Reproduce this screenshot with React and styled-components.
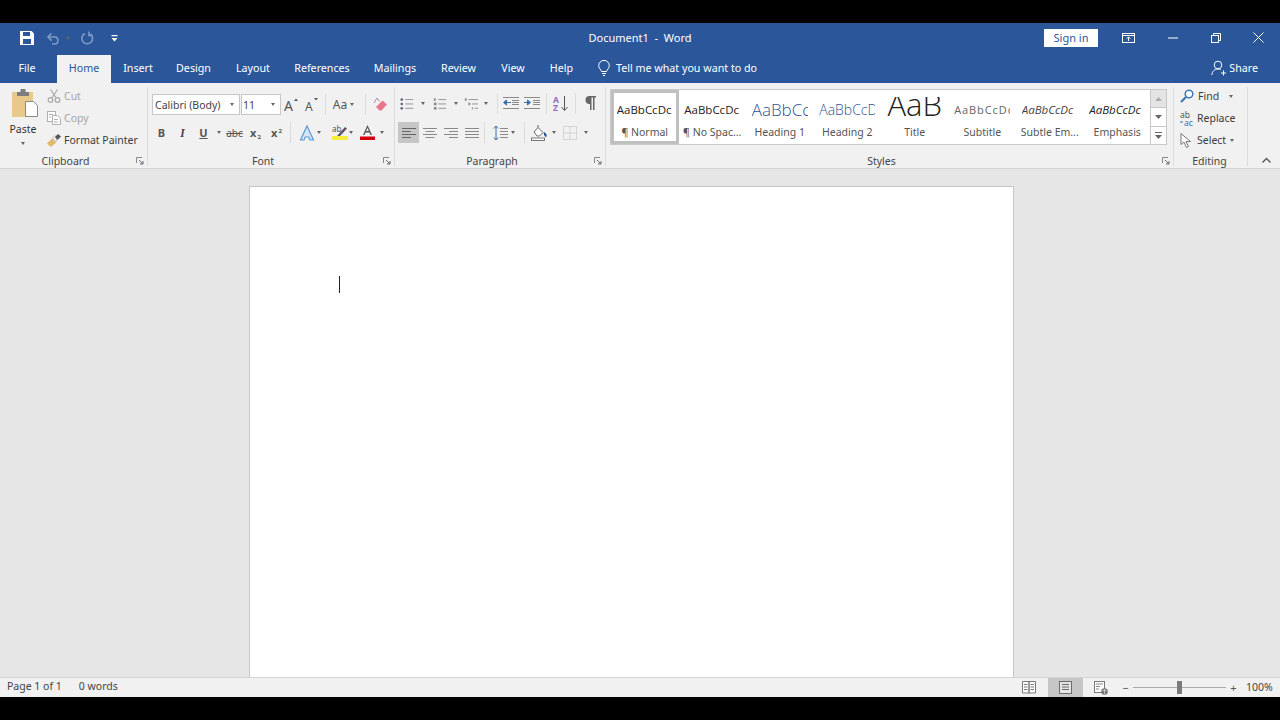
import React from "react";
import styled, { createGlobalStyle } from "styled-components";

const Global = createGlobalStyle`
  html, body { margin: 0; padding: 0; background: #000; }
  body { font-family: "Noto Sans", "Open Sans", sans-serif; }
`;

const Page = styled.div`
  width: 1280px; height: 720px; box-sizing: border-box; padding: 23px 0;
  display: flex; flex-direction: column; background: #000; overflow: hidden;
`;
const TitleBar = styled.div`
  height: 31px; flex: none; box-sizing: border-box; padding-bottom: 2px; background: #2b579a; color: #fff;
  display: grid; grid-template-columns: 1fr auto 1fr; align-items: center;
`;
const QuickAccess = styled.div`display: flex; align-items: center; padding-left: 20px; margin-top: 1px;`;
const DocTitle = styled.div`font-size: 11px; white-space: pre;`;
const WindowControls = styled.div`display: flex; align-items: center; justify-content: flex-end;`;
const SignIn = styled.div`
  width: 54px; height: 18px; background: #fff; color: #2b579a; font-size: 11px;
  display: flex; align-items: center; justify-content: center; margin-right: 24px;
`;
const WinBtn = styled.div`
  width: 14px; height: 14px; display: flex; align-items: center;
  margin-left: ${p => p.$ml || 0}px; margin-right: ${p => p.$mr || 0}px;
`;
const TabBar = styled.div`
  height: 29px; flex: none; background: #2b579a; color: #fff; display: flex; align-items: flex-end;
  padding-left: 8px; font-size: 10.7px;
`;
const Tab = styled.div`
  width: ${p => p.$w}px; height: 28px; display: flex; align-items: center; justify-content: center;
  padding-bottom: 2px; box-sizing: border-box; margin-right: ${p => p.$mr || 0}px;
  background: ${p => (p.$active ? "#f1f1f1" : "transparent")};
  color: ${p => (p.$active ? "#2b579a" : "#fff")};
`;
const TellMe = styled.div`display: flex; align-items: center; gap: 6px; height: 28px; padding-bottom: 2px; box-sizing: border-box; margin-left: 14px;`;
const Share = styled.div`display: flex; align-items: center; gap: 2px; height: 28px; padding-bottom: 2px; box-sizing: border-box; margin-left: auto; margin-right: 22px;`;

const Ribbon = styled.div`
  height: 86px; flex: none; box-sizing: border-box; padding-top: 4px; background: #f1f1f1;
  border-bottom: 1px solid #d4d4d4; display: flex; align-items: flex-start; color: #444;
`;
const Group = styled.div`
  width: ${p => p.$w}px; height: 79px; flex: none; box-sizing: border-box; display: flex; flex-direction: column;
  border-right: 1px solid #dcdcdc;
`;
const GroupBody = styled.div`
  height: 69px; flex: none; box-sizing: border-box; display: flex;
  flex-direction: ${p => (p.$row ? "row" : "column")};
  padding-top: ${p => p.$pt || 0}px;
`;
const GroupFoot = styled.div`height: 10px; display: flex; align-items: center; font-size: 10.5px; color: #444;`;
const GroupName = styled.div`flex: 1; text-align: center; padding-right: ${p => p.$pr ?? 5}px; line-height: 10px;`;
const Launcher = styled.svg`width: 8px; height: 8px; margin-right: 3px; flex: none; display: block;`;

const PasteCol = styled.div`
  width: 46px; flex: none; display: flex; flex-direction: column; align-items: center; padding-top: 2px;
  box-sizing: border-box; font-size: 10.5px; color: #333;
`;
const PasteLabel = styled.div`line-height: 14px; margin-top: 5px;`;
const PasteCaret = styled.div`
  width: 0; height: 0; margin-top: 6px; border: 2.5px solid transparent; border-top: 3px solid #666; border-bottom: 0;
`;
const SmallCol = styled.div`display: flex; flex-direction: column; gap: 4px; padding-left: ${p => p.$pl || 0}px;`;
const SmallRow = styled.div`
  height: 18px; display: flex; align-items: center; font-size: 10.5px;
  color: ${p => (p.$dim ? "#a6a6a6" : "#3c3c3c")};
  gap: ${p => p.$gap ?? 3}px;
`;
const Row = styled.div`
  height: 21px; box-sizing: border-box; display: flex; align-items: center; padding-left: ${p => p.$pl || 0}px; margin-bottom: 7px;
  padding-bottom: ${p => p.$pb || 0}px;
`;
const Combo = styled.div`
  width: ${p => p.$w}px; height: 21px; box-sizing: border-box; margin-left: ${p => p.$ml || 0}px; background: #fff;
  border: 1px solid #c6c6c6; display: flex; align-items: center; justify-content: space-between;
  padding: 0 4px 0 ${p => p.$pl ?? 2}px; font-size: 10.5px; color: #444; white-space: nowrap;
`;
const Tool = styled.div`
  width: ${p => p.$w || 16}px; height: 21px; flex: none; margin-left: ${p => p.$ml || 0}px;
  display: flex; align-items: center; justify-content: center;
  background: ${p => (p.$active ? "#c6c6c6" : "transparent")};
`;
const Letter = styled.span`
  font-family: "Liberation Serif", serif; font-size: 11.5px; color: #444; font-style: italic; font-weight: 700;
`;
const SansLetter = styled.span`
  font-size: ${p => p.$s || 11}px; color: #555; font-weight: ${p => p.$b ? 700 : 400}; white-space: nowrap;
  text-decoration: ${p => p.$strike ? "line-through" : "none"};
`;
const Sup = styled.span`font-size: 6px; position: relative; top: ${p => p.$t}px; color: #555; margin-left: 1px;`;
const CaretBox = styled.div`
  width: 6px; height: 21px; flex: none; margin-left: ${p => p.$ml || 0}px; display: flex; align-items: center; justify-content: center;
  &::after { content: ""; border: 2.5px solid transparent; border-top: 3px solid #666; border-bottom: 0; }
`;
const Sep = styled.div`width: 1px; height: 21px; flex: none; background: #dcdcdc; margin-left: ${p => p.$ml || 0}px;`;

const Gallery = styled.div`
  margin: 2px 0 0 4px; width: 557px; height: 56px; box-sizing: border-box; background: #fff; border: 1px solid #c8c8c8;
  display: flex;
`;
const StyleList = styled.div`flex: 1; display: flex; padding: 0; min-width: 0;`;
const StyleItem = styled.div`
  width: 67.5px; flex: none; box-sizing: border-box; display: flex; flex-direction: column; align-items: center;
  border: ${p => (p.$active ? "3px solid #c0c0c0" : "3px solid transparent")}; overflow: hidden;
`;
const StylePreview = styled.div`
  width: 56px; flex: none; overflow: hidden; box-sizing: border-box; display: flex; align-items: center; white-space: nowrap;
  height: ${p => p.$clip ? 27 : 30}px; margin-top: ${p => p.$clip ? 4 : 1}px; padding-bottom: ${p => p.$clip ? 13 : 0}px;
  font-family: "Open Sans", sans-serif;
  font-size: ${p => p.$s}px; color: ${p => p.$c || "#222"}; font-style: ${p => p.$i ? "italic" : "normal"};
  letter-spacing: ${p => p.$ls || 0}px; font-weight: ${p => p.$w || 400}; line-height: 27px;
  justify-content: ${p => p.$clip ? "center" : "flex-start"};
`;
const StyleLabel = styled.div`font-size: 10.5px; color: #555; white-space: nowrap; line-height: 14px; margin-top: 1px;`;
const ScrollCol = styled.div`width: 15px; flex: none; display: flex; flex-direction: column; border-left: 1px solid #c8c8c8;`;
const ScrollBtn = styled.div`
  flex: 1; display: flex; align-items: center; justify-content: center; background: ${p => p.$dim ? "#e4e4e4" : "#fff"};
  & + & { border-top: 1px solid #c8c8c8; }
`;
const Collapse = styled.div`flex: 1; height: 79px; box-sizing: border-box; display: flex; align-items: flex-end; justify-content: center; padding: 0 0 3px 4px;`;

const Canvas = styled.div`flex: 1; min-height: 0; background: #e6e6e6; padding: 17px 0 0 249px; overflow: hidden;`;
const Paper = styled.div`
  width: 765px; height: 900px; box-sizing: border-box; background: #fff; border: 1px solid #c6c6c6;
  padding: 89px 0 0 89px;
`;
const Caret = styled.div`width: 1px; height: 17px; background: #222;`;
const StatusBar = styled.div`
  height: 20px; flex: none; box-sizing: border-box; background: #f1f1f1; border-top: 1px solid #d4d4d4;
  display: flex; align-items: center; font-size: 10.5px; color: #444;
`;
const StatusText = styled.div`margin-left: ${p => p.$ml}px; margin-bottom: 2px; line-height: 17px; white-space: nowrap;`;
const StatusRight = styled.div`margin-left: auto; display: flex; align-items: center;`;
const ViewBtn = styled.div`
  width: ${p => p.$w}px; height: 19px; flex: none; display: flex; align-items: center; justify-content: center;
  background: ${p => p.$active ? "#c6c6c6" : "transparent"};
  margin-left: ${p => p.$ml || 0}px;
`;
const Slider = styled.div`
  width: 93px; height: 1px; background: #aaa; margin-left: 4px; display: flex; align-items: center; justify-content: center;
  &::after { content: ""; width: 5px; height: 13px; background: #7a7a7a; flex: none; margin-left: -1px; }
`;
const Zoom = styled.div`margin-left: 9px; width: 34px; font-size: 10.5px; margin-bottom: 2px;`;
const Ico = styled.svg`display: block; flex: none; overflow: visible;`;
const PasteSvg = styled(Ico)`margin-left: 4px;`;

const Lines = ({ ys, x1 = 6, x2 = 15, c = "#8a8a8a" }) => ys.map(y => <line key={y} x1={x1} x2={x2} y1={y} y2={y} stroke={c} />);

const Save = () => <Ico width="14" height="14" viewBox="0 0 14 14"><path d="M0 0h11.5L14 2.5V14H0z" fill="#fff"/><rect x="3" y="1" width="7" height="4" fill="#2b579a"/><rect x="3" y="8" width="8" height="5" fill="#2b579a"/></Ico>;
const Undo = () => <Ico width="14" height="13" viewBox="0 0 14 13" fill="none" stroke="#7e9ac6" strokeWidth="1.6"><path d="M1 5h8a4 4 0 0 1 0 7H5M4.5 1.2 1 5l3.5 3.6"/></Ico>;
const Redo = () => <Ico width="14" height="14" viewBox="0 0 14 14" fill="none" stroke="#7e9ac6" strokeWidth="1.6"><path d="M5 2.4A5.4 5.4 0 1 0 10.4 3M9 .5v4h4"/></Ico>;
const Custom = () => <Ico width="7" height="7" viewBox="0 0 7 7"><rect x="0.5" y="0" width="6" height="1.2" fill="#fff"/><path d="M0.5 3h6L3.5 6.5z" fill="#fff"/></Ico>;
const Bulb = () => <Ico width="12" height="17" viewBox="0 0 12 17" fill="none" stroke="#fff"><path d="M3.500 11.500C3 9.500.700 8.500.700 5.700a5.300 5.300 0 0 1 10.600 0c0 2.800-2.300 3.800-2.800 5.800z"/><path d="M4 13.500h4M5 15.500h2"/></Ico>;
const ShareIco = () => <Ico width="16" height="16" viewBox="0 0 16 16" fill="none" stroke="#fff"><circle cx="7" cy="5" r="3.800"/><path d="M.8 15c.5-3.800 2.800-6 6.200-6 1 0 2 .2 2.700.7M10 13h5M12.500 10.500v5"/></Ico>;
const RibbonOpt = () => <Ico width="13" height="10" viewBox="0 0 13 10" fill="none" stroke="#fff"><rect x=".5" y=".5" width="12" height="9"/><path d="M.5 2.500h12"/><path d="M6.500 8V4M4.800 5.600l1.700-1.700 1.700 1.700"/></Ico>;
const Min = () => <Ico width="10" height="10" viewBox="0 0 10 10"><line x1="0" x2="10" y1="5" y2="5" stroke="#fff"/></Ico>;
const Restore = () => <Ico width="10" height="10" viewBox="0 0 10 10" fill="none" stroke="#fff"><rect x=".5" y="2.500" width="7" height="7"/><path d="M2.500 2.500v-2h7v7h-2"/></Ico>;
const Close = () => <Ico width="11" height="11" viewBox="0 0 11 11" stroke="#fff"><path d="M.5.500l10 10M10.500.500l-10 10"/></Ico>;

const PasteIco = () => (
  <PasteSvg width="26" height="28" viewBox="0 0 26 28">
    <rect x="0" y="3" width="21" height="25" fill="#e9c88c"/>
    <rect x="5" y="3" width="12" height="4" fill="#7d7d7d"/>
    <rect x="8.500" y="0" width="5" height="4" fill="#7d7d7d"/>
    <path d="M13.500 12.500h8l4 4v11h-12z" fill="#fff" stroke="#8a8a8a"/>
  </PasteSvg>
);
const CutIco = () => <Ico width="14" height="14" viewBox="0 0 14 14" fill="none" stroke="#a8a8a8" strokeWidth="1.200"><circle cx="3.500" cy="11" r="2.300"/><circle cx="10.500" cy="11" r="2.300"/><path d="M4.800 9 10.500.500M9.200 9 3.500.500"/></Ico>;
const CopyIco = () => <Ico width="14" height="14" viewBox="0 0 14 14" fill="#fff" stroke="#b0b0b0"><rect x=".5" y=".5" width="8" height="10"/><path d="M5.500 4.500h5l3 3v6h-8z"/><path d="M2 3.500h4M2 6h2M7 8.500h4M7 11h4" /></Ico>;
const Painter = () => <Ico width="14" height="13" viewBox="0 0 14 13"><path d="M0 9.500 5 4.500 9 8.500 4 13z" fill="#e0b868"/><path d="M5.500 4 8 1.500 10.500 4 9 8z" fill="#eee" stroke="#999" strokeWidth=".5"/><path d="M8 3l3-3 3 2.500-3.500 3.500z" fill="#555"/></Ico>;
const AUp = ({ up }) => <Ico width="14" height="14" viewBox="0 0 14 14"><text x="0" y="13" fontFamily="Noto Sans" fontSize={up ? 14 : 12} fill="#555">A</text>{up ? <path d="M10 3l2-2.500L14 3z" fill="#555"/> : <path d="M9 0h4l-2 2.500z" fill="#555"/>}</Ico>;
const Eraser = () => <Ico width="15" height="14" viewBox="0 0 15 14"><path d="M4 9 10.500 2.500l4.500 4-5.500 6H7.500z" fill="#e9768c"/><path d="M2 5 5 0l2.500 3.500" fill="none" stroke="#b08aa0"/></Ico>;
const TextEffect = () => <Ico width="16" height="16" viewBox="0 0 16 16"><path d="M8 1 14.500 15h-3.500l-1.200-3H6.200L5 15H1.500z" fill="#d6e6f7" stroke="#5b9bd5" strokeWidth="1.200"/></Ico>;
const Highlight = () => <Ico width="17" height="15" viewBox="0 0 17 15"><rect x="0" y="11" width="16" height="4" fill="#f5ee3a"/><text x="0" y="7" fontFamily="Noto Sans" fontSize="8" fill="#555">ab</text><path d="M5 11 13 2l2 1.500-7 7.500z" fill="#555"/></Ico>;
const FontColor = () => <Ico width="15" height="15" viewBox="0 0 15 15"><path d="M7.500 0 12 10h-1.500L9.400 7.500H5.600L4.500 10H3zM6.200 6h2.600L7.500 2.800z" fill="#555"/><rect x="0" y="11.500" width="15" height="3.500" fill="#d6000f"/></Ico>;

const Bullets = () => <Ico width="14" height="13" viewBox="0 0 16 14"><Lines ys={[2.500, 7.500, 12.500]}/><circle cx="2" cy="2.500" r="1.500" fill="#667"/><circle cx="2" cy="7.500" r="1.500" fill="#667"/><circle cx="2" cy="12.500" r="1.500" fill="#667"/></Ico>;
const Numbers = () => <Ico width="14" height="13" viewBox="0 0 16 14"><Lines ys={[2.500, 7.500, 12.500]}/><rect x="1" y="1" width="2" height="3" fill="#8a8a8a"/><rect x="1" y="6" width="3" height="3" fill="#8a8a8a"/><rect x="1" y="11" width="3" height="3" fill="#8a8a8a"/></Ico>;
const Multi = () => <Ico width="14" height="13" viewBox="0 0 16 14"><Lines ys={[2.500]} x1={5} x2={16}/><Lines ys={[7.500]} x1={9} x2={16}/><Lines ys={[12.500]} x1={12} x2={16}/><rect x="1" y="1" width="2" height="3" fill="#8a8a8a"/><rect x="5" y="6" width="2" height="3" fill="#8a8a8a"/><rect x="9" y="11" width="1" height="3" fill="#8a8a8a"/></Ico>;
const Indent = ({ inc }) => (
  <Ico width="16" height="12" viewBox="0 0 16 12">
    <Lines ys={[.5, 11.5]} x1={0} x2={16}/>
    <Lines ys={[3.500, 5.500, 7.500]} x1={9} x2={16}/>
    <path d={inc ? "M0 5.500h5M3.500 3l3 2.500-3 2.500z" : "M3 5.500h5M3.500 3l-3 2.500 3 2.500z"} fill="#3b6fb0" stroke="#3b6fb0"/>
  </Ico>
);
const Sort = () => <Ico width="16" height="17" viewBox="0 0 16 17"><text x="0" y="7.500" fontFamily="Noto Sans" fontSize="8.500" fontWeight="700" fill="#8f6cc0">A</text><text x="0" y="16" fontFamily="Noto Sans" fontSize="8.500" fontWeight="700" fill="#8f6cc0">Z</text><path d="M11.500 1v14M8.500 12l3 3.500 3-3.500" stroke="#555" fill="none"/></Ico>;
const Pilcrow = () => <Ico width="11" height="14" viewBox="0 0 11 14"><path d="M4.500 0H11v1.500H9.500V14H8V1.500H6.500V14H5V8H4.500a4 4 0 0 1 0-8z" fill="#666"/></Ico>;
const Align = ({ type, c = "#8a8a8a" }) => {
  const rows = type === "left" ? [[0,14],[0,9],[0,14],[0,9]] : type === "center" ? [[0,14],[2.5,11.5],[0,14],[2.5,11.5]] : type === "right" ? [[0,14],[5,14],[0,14],[5,14]] : [[0,14],[0,14],[0,14],[0,14]];
  return <Ico width="14" height="10" viewBox="0 0 14 10">{rows.map((r, i) => <line key={i} x1={r[0]} x2={r[1]} y1={.5 + i * 3} y2={.5 + i * 3} stroke={c}/>)}</Ico>;
};
const LineSp = () => <Ico width="15" height="16" viewBox="0 0 15 16"><path d="M3 1v14M.8 3.500 3 1l2.200 2.500M.8 12.500 3 15l2.200-2.500" stroke="#3b6fb0" fill="none"/><Lines ys={[3.500, 6.500, 9.500, 12.500]} x1={7}/></Ico>;
const Shading = () => <Ico width="18" height="16" viewBox="0 0 18 16"><rect x="0.500" y="13" width="13" height="2.500" fill="#fff" stroke="#777"/><path d="M3 7 7 2.500 12 7.500 8.500 11H6z" fill="#fff" stroke="#666"/><path d="M13 7c2 1 3 3 2.500 4.500S12 10 13 7z" fill="#1f4e8c"/><path d="M7 2.500V0" stroke="#666"/></Ico>;
const Borders = () => <Ico width="14" height="14" viewBox="0 0 14 14" fill="none" stroke="#bbb" strokeDasharray="1 1"><rect x=".5" y=".5" width="13" height="13" /><path d="M7 .5v13M.5 7h13"/></Ico>;
const Up = ({ c = "#888" }) => <Ico width="7" height="4" viewBox="0 0 7 4"><path d="M0 4l3.500-4L7 4z" fill={c}/></Ico>;
const Down = () => <Ico width="7" height="4" viewBox="0 0 7 4"><path d="M0 0l3.500 4L7 0z" fill="#666"/></Ico>;
const More = () => <Ico width="7" height="7" viewBox="0 0 7 7"><rect width="7" height="1" fill="#666"/><path d="M0 3l3.500 4L7 3z" fill="#666"/></Ico>;
const LauncherIco = () => <Launcher viewBox="0 0 8 8" fill="none"><path d="M.5 6V.5H6" stroke="#888"/><path d="M3 3l4 4M7 4v3H4" stroke="#667"/></Launcher>;
const FindIco = () => <Ico width="14" height="14" viewBox="0 0 14 14"><circle cx="9" cy="5" r="3.800" fill="#fff" stroke="#3b78b8" strokeWidth="1.500"/><path d="M6 8l-5 5" stroke="#3b78b8" strokeWidth="2.200"/></Ico>;
const ReplaceIco = () => <Ico width="15" height="15" viewBox="0 0 15 15"><text x="0" y="7" fontFamily="Noto Sans" fontSize="8.500" fill="#555">ab</text><text x="4" y="15" fontFamily="Noto Sans" fontSize="8.500" fill="#3b6fb0">ac</text><path d="M0 11h3" stroke="#3b6fb0"/></Ico>;
const SelectIco = () => <Ico width="12" height="15" viewBox="0 0 12 15" fill="#fff" stroke="#777"><path d="M1 .5v11l3-2.500 2.500 5.500 2-1L6 8.500h4.500z"/></Ico>;
const Chevron = () => <Ico width="9" height="5" viewBox="0 0 9 5" fill="none" stroke="#555" strokeWidth="1.300"><path d="M.5 4.500l4-4 4 4"/></Ico>;
const ReadIco = () => <Ico width="14" height="13" viewBox="0 0 14 13" fill="#fff" stroke="#7a7a7a"><path d="M.5.500h6.500v11.500H.5zM7 .5h6.500v11.500H7z"/><path d="M2 3.500h3.500M2 6h3.500M2 8.500h3.500M8.500 3.500h3.500M8.500 6h3.500M8.500 8.500h3.500"/></Ico>;
const PrintIco = () => <Ico width="13" height="13" viewBox="0 0 13 13" fill="#e4e4e4" stroke="#6d6d6d"><rect x=".5" y=".5" width="12" height="12"/><path d="M3 3.500h7M3 6h7M3 8.500h7"/></Ico>;
const WebIco = () => <Ico width="14" height="14" viewBox="0 0 14 14"><rect x=".5" y=".5" width="10" height="11" fill="#fff" stroke="#7a7a7a"/><path d="M2 3h7M2 5.500h4M2 8h3" stroke="#888"/><circle cx="10.500" cy="10.500" r="3.300" fill="#777"/><path d="M8.500 9.500h4M10.500 8v5" stroke="#ddd" strokeWidth=".7"/></Ico>;

const tabs = [
  ["File", 38, 11], ["Home", 54, 0, true], ["Insert", 54], ["Design", 57], ["Layout", 62],
  ["References", 76], ["Mailings", 70], ["Review", 57], ["View", 52], ["Help", 45],
];
const styleItems = [
  { label: "¶ Normal", active: true, s: 11.5 },
  { label: "¶ No Spac...", s: 11.5 },
  { label: "Heading 1", s: 17, c: "#2f5496", w: 300 },
  { label: "Heading 2", s: 14, c: "#2f5496", w: 300 },
  { label: "Title", s: 31, c: "#222", w: 300, clip: true, text: "AaB" },
  { label: "Subtitle", s: 11, c: "#666", ls: 0.9 },
  { label: "Subtle Em...", s: 11.5, c: "#444", i: true },
  { label: "Emphasis", s: 11.5, c: "#222", i: true },
];

export default function App() {
  return (
    <Page>
      <Global />
      <TitleBar>
        <QuickAccess>
          <Save />
          <WinBtn $ml={13}><Undo /></WinBtn>
          <CaretBox $ml={4} />
          <WinBtn $ml={9}><Redo /></WinBtn>
          <WinBtn $ml={17}><Custom /></WinBtn>
        </QuickAccess>
        <DocTitle>Document1  -  Word</DocTitle>
        <WindowControls>
          <SignIn>Sign in</SignIn>
          <WinBtn><RibbonOpt /></WinBtn>
          <WinBtn $ml={32}><Min /></WinBtn>
          <WinBtn $ml={29}><Restore /></WinBtn>
          <WinBtn $ml={28} $mr={13}><Close /></WinBtn>
        </WindowControls>
      </TitleBar>
      <TabBar>
        {tabs.map(([name, w, mr, active]) => <Tab key={name} $w={w} $mr={mr} $active={active}>{name}</Tab>)}
        <TellMe><Bulb />Tell me what you want to do</TellMe>
        <Share><ShareIco />Share</Share>
      </TabBar>
      <Ribbon>
        <Group $w={148}>
          <GroupBody $row>
            <PasteCol>
              <PasteIco />
              <PasteLabel>Paste</PasteLabel>
              <PasteCaret />
            </PasteCol>
            <SmallCol $pl={1}>
              <SmallRow $dim><CutIco />Cut</SmallRow>
              <SmallRow $dim><CopyIco />Copy</SmallRow>
              <SmallRow><Painter />Format Painter</SmallRow>
            </SmallCol>
          </GroupBody>
          <GroupFoot><GroupName>Clipboard</GroupName><LauncherIco /></GroupFoot>
        </Group>
        <Group $w={247}>
          <GroupBody $pt={7}>
            <Row $pl={4}>
              <Combo $w={88}>Calibri (Body)<CaretBox /></Combo>
              <Combo $w={40} $ml={1} $pl={1}>11<CaretBox /></Combo>
              <Tool $w={20}><AUp up /></Tool>
              <Tool $w={21}><AUp /></Tool>
              <Sep $ml={3} />
              <Tool $w={18} $ml={5}><SansLetter $s={12}>Aa</SansLetter></Tool>
              <CaretBox />
              <Sep $ml={10} />
              <Tool $ml={5}><Eraser /></Tool>
            </Row>
            <Row $pl={3}>
              <Tool $w={21}><SansLetter $b $s={11}>B</SansLetter></Tool>
              <Tool $w={21}><Letter>I</Letter></Tool>
              <Tool $w={21}><SansLetter $b $s={11}><u>U</u></SansLetter></Tool>
              <CaretBox $ml={2} />
              <Tool $w={21} $ml={2}><SansLetter $s={10} $strike>abc</SansLetter></Tool>
              <Tool $w={21}><SansLetter $b>x<Sup $t={2}>2</Sup></SansLetter></Tool>
              <Tool $w={21}><SansLetter $b>x<Sup $t={-4}>2</Sup></SansLetter></Tool>
              <Sep $ml={3} />
              <Tool $ml={8}><TextEffect /></Tool>
              <CaretBox $ml={1} />
              <Tool $ml={10}><Highlight /></Tool>
              <CaretBox />
              <Tool $ml={5}><FontColor /></Tool>
              <CaretBox $ml={4} />
            </Row>
          </GroupBody>
          <GroupFoot><GroupName>Font</GroupName><LauncherIco /></GroupFoot>
        </Group>
        <Group $w={211}>
          <GroupBody $pt={7}>
            <Row $pl={4} $pb={3}>
              <Tool><Bullets /></Tool>
              <CaretBox $ml={5} />
              <Tool $ml={6}><Numbers /></Tool>
              <CaretBox $ml={5} />
              <Tool $ml={4}><Multi /></Tool>
              <CaretBox $ml={4} />
              <Sep $ml={8} />
              <Tool $ml={5}><Indent /></Tool>
              <Tool $ml={5}><Indent inc /></Tool>
              <Sep $ml={6} />
              <Tool $ml={6}><Sort /></Tool>
              <Sep $ml={6} />
              <Tool $ml={6}><Pilcrow /></Tool>
            </Row>
            <Row $pl={3}>
              <Tool $w={21} $active><Align type="left" c="#666" /></Tool>
              <Tool $w={21}><Align type="center" /></Tool>
              <Tool $w={21}><Align type="right" /></Tool>
              <Tool $w={21}><Align type="justify" /></Tool>
              <Sep $ml={2} />
              <Tool $ml={7}><LineSp /></Tool>
              <CaretBox $ml={2} />
              <Sep $ml={8} />
              <Tool $ml={7}><Shading /></Tool>
              <CaretBox $ml={3} />
              <Tool $ml={5}><Borders /></Tool>
              <CaretBox $ml={5} />
            </Row>
          </GroupBody>
          <GroupFoot><GroupName>Paragraph</GroupName><LauncherIco /></GroupFoot>
        </Group>
        <Group $w={568}>
          <GroupBody>
            <Gallery>
              <StyleList>
                {styleItems.map(it => (
                  <StyleItem key={it.label} $active={it.active}>
                    <StylePreview $s={it.s} $c={it.c} $w={it.w} $i={it.i} $ls={it.ls} $clip={it.clip}>{it.text || "AaBbCcDc"}</StylePreview>
                    <StyleLabel>{it.label}</StyleLabel>
                  </StyleItem>
                ))}
              </StyleList>
              <ScrollCol>
                <ScrollBtn $dim><Up c="#aaa" /></ScrollBtn>
                <ScrollBtn><Down /></ScrollBtn>
                <ScrollBtn><More /></ScrollBtn>
              </ScrollCol>
            </Gallery>
          </GroupBody>
          <GroupFoot><GroupName>Styles</GroupName><LauncherIco /></GroupFoot>
        </Group>
        <Group $w={74}>
          <GroupBody>
            <SmallCol $pl={6}>
              <SmallRow $gap={4}><FindIco />Find<CaretBox $ml={5} /></SmallRow>
              <SmallRow $gap={2}><ReplaceIco />Replace</SmallRow>
              <SmallRow $gap={5}><SelectIco />Select<CaretBox $ml={-2} /></SmallRow>
            </SmallCol>
          </GroupBody>
          <GroupFoot><GroupName $pr={2}>Editing</GroupName></GroupFoot>
        </Group>
        <Collapse><Chevron /></Collapse>
      </Ribbon>
      <Canvas>
        <Paper><Caret /></Paper>
      </Canvas>
      <StatusBar>
        <StatusText $ml={7}>Page 1 of 1</StatusText>
        <StatusText $ml={17}>0 words</StatusText>
        <StatusRight>
          <ViewBtn $w={14}><ReadIco /></ViewBtn>
          <ViewBtn $w={35} $ml={12} $active><PrintIco /></ViewBtn>
          <ViewBtn $w={14} $ml={11}><WebIco /></ViewBtn>
          <ViewBtn $w={7} $ml={14}><SansLetter>−</SansLetter></ViewBtn>
          <Slider />
          <ViewBtn $w={7} $ml={4}><SansLetter>+</SansLetter></ViewBtn>
          <Zoom>100%</Zoom>
        </StatusRight>
      </StatusBar>
    </Page>
  );
}
